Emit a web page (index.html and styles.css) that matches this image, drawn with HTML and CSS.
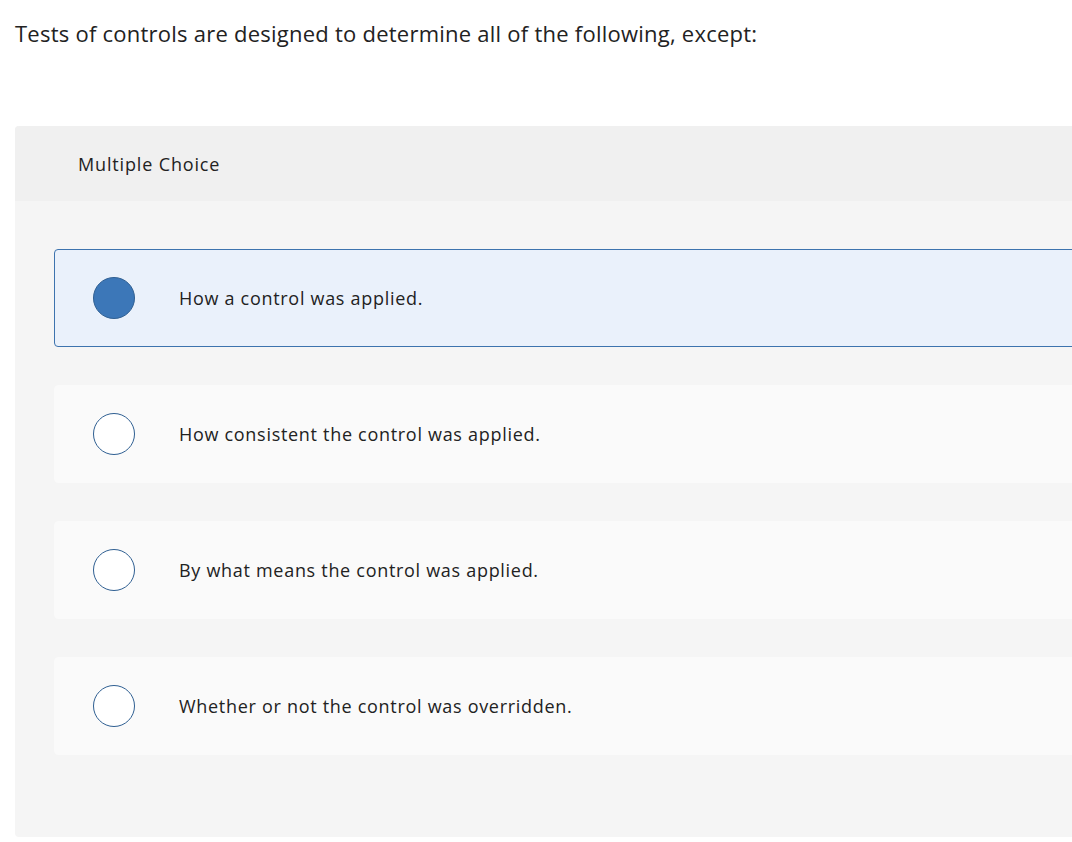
FILE: index.html
```html
<!DOCTYPE html>
<html lang="en">
<head>
    <meta charset="UTF-8">
    <title>Multiple Choice</title>
    <link rel="stylesheet" href="styles.css">
</head>
<body>

    <!-- Question prompt -->
    <p class="question">Tests of controls are designed to determine all of the following, except:</p>

    <div class="panel">
        <div class="panel-header">Multiple Choice</div>
        <div class="choices">
            <label class="choice selected">
                <span class="radio"></span>
                <span class="choice-text">How a control was applied.</span>
            </label>
            <label class="choice">
                <span class="radio"></span>
                <span class="choice-text">How consistent the control was applied.</span>
            </label>
            <label class="choice">
                <span class="radio"></span>
                <span class="choice-text">By what means the control was applied.</span>
            </label>
            <label class="choice">
                <span class="radio"></span>
                <span class="choice-text">Whether or not the control was overridden.</span>
            </label>
        </div>
    </div>

</body>
</html>
```

FILE: styles.css
```css
body {
    font-family: 'Open Sans', 'Lato', sans-serif;
    background-color: #fff;
    color: #222;
    margin: 0;
    overflow: hidden;
}

.question {
    font-size: 22px;
    letter-spacing: 0.24px;
    margin: 0;
    padding: 20px 0 0 15px;
    line-height: 26px;
}

.panel {
    width: 1100px;
    margin: 80px 0 0 15px;
    background-color: #f5f5f5;
    border-radius: 4px;
    overflow: hidden;
}

.panel-header {
    height: 75px;
    padding-left: 63px;
    display: flex;
    align-items: center;
    font-size: 18px;
    letter-spacing: 0.85px;
    background-color: #f0f0f0;
}

.choices {
    display: flex;
    flex-direction: column;
    gap: 38px;
    padding: 48px 0 82px 39px;
}

.choice {
    height: 98px;
    box-sizing: border-box;
    display: flex;
    align-items: center;
    padding-left: 38px;
    background-color: #fafafa;
    border: 1px solid #fafafa;
    border-radius: 4px;
    cursor: pointer;
}

.choice.selected {
    background-color: #eaf1fb;
    border-color: #3d73ae;
}

.radio {
    width: 40px;
    height: 40px;
    border-radius: 50%;
    border: 1px solid #2f5f92;
    background-color: #fff;
    flex-shrink: 0;
}

.choice.selected .radio {
    background-color: #3c77b8;
}

.choice-text {
    margin-left: 44px;
    font-size: 18px;
    letter-spacing: 0.7px;
}
```
